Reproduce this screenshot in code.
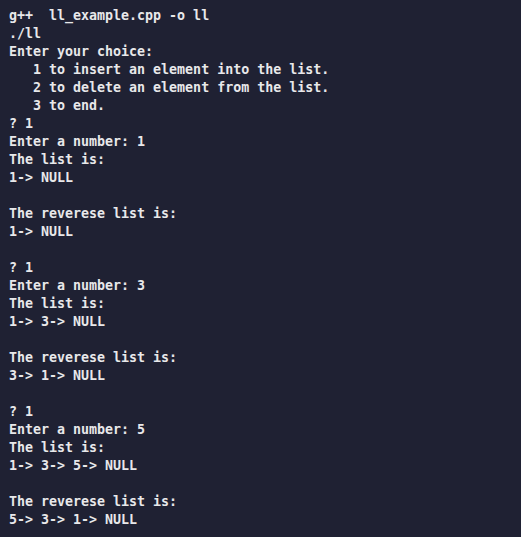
import React from 'react';

const lines = [
  'g++  ll_example.cpp -o ll',
  './ll',
  'Enter your choice:',
  '   1 to insert an element into the list.',
  '   2 to delete an element from the list.',
  '   3 to end.',
  '? 1',
  'Enter a number: 1',
  'The list is:',
  '1-> NULL',
  '',
  'The reverese list is:',
  '1-> NULL',
  '',
  '? 1',
  'Enter a number: 3',
  'The list is:',
  '1-> 3-> NULL',
  '',
  'The reverese list is:',
  '3-> 1-> NULL',
  '',
  '? 1',
  'Enter a number: 5',
  'The list is:',
  '1-> 3-> 5-> NULL',
  '',
  'The reverese list is:',
  '5-> 3-> 1-> NULL',
];

const App: React.FC = () => {
  return (
    <div className="w-[521px] h-[537px] bg-[#1f2133] overflow-hidden">
      <pre className="pl-[9px] pt-[7px] font-['DejaVu_Sans_Mono','Liberation_Mono',monospace] text-[13.3px] leading-[18px] font-bold text-[#e8e8ea] whitespace-pre">
        {lines.map((line, i) => (
          <div key={i} className="h-[18px]">{line}</div>
        ))}
      </pre>
    </div>
  );
};

export default App;
